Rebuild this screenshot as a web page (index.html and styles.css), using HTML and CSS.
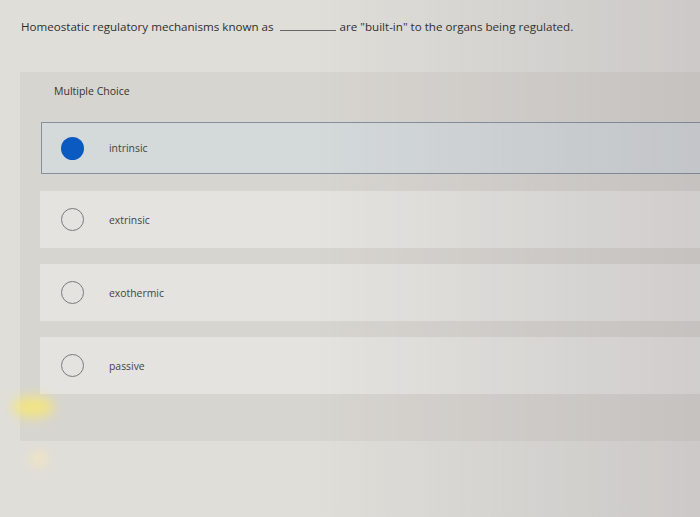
FILE: index.html
```html
<!DOCTYPE html>
<html lang="en">
<head>
    <meta charset="UTF-8">
    <meta name="viewport" content="width=device-width, initial-scale=1.0">
    <title>Multiple Choice</title>
    <link rel="stylesheet" href="styles.css">
</head>
<body>
    <p class="question">
        Homeostatic regulatory mechanisms known as <span class="blank"></span> are "built-in" to the organs being regulated.
    </p>

    <div class="panel">
        <div class="panel-title">Multiple Choice</div>

        <div class="choice selected">
            <span class="radio"></span>
            <span class="label">intrinsic</span>
        </div>
        <div class="choice">
            <span class="radio"></span>
            <span class="label">extrinsic</span>
        </div>
        <div class="choice">
            <span class="radio"></span>
            <span class="label">exothermic</span>
        </div>
        <div class="choice">
            <span class="radio"></span>
            <span class="label">passive</span>
        </div>
    </div>

    <span class="glare glare-big"></span>
    <span class="glare glare-small"></span>
</body>
</html>
```

FILE: styles.css
```css
body {
    margin: 0;
    height: 517px;
    overflow: hidden;
    font-family: "Open Sans", Lato, sans-serif;
    color: #3a3a3a;
    background: #dfded9;
}
/* screen tint: darker towards the right edge */
body::after {
    content: "";
    position: fixed;
    inset: 0;
    pointer-events: none;
    background: linear-gradient(to right, rgba(90, 80, 95, 0) 45%, rgba(90, 80, 95, 0.14) 100%);
}
.question {
    margin: 0;
    padding: 19px 21px 0;
    font-size: 11.6px;
    line-height: 15px;
    color: #2f2f2f;
}
.blank {
    display: inline-block;
    width: 56px;
    height: 9px;
    border-bottom: 1px solid #666;
    margin: 0 1px 0 3px;
}
.panel {
    margin: 38px 0 0 20px;
    padding-bottom: 47px;
    background: #d7d5d0;
}
.panel-title {
    height: 38px;
    line-height: 38px;
    padding-left: 34px;
    margin-bottom: 12px;
    font-size: 10.5px;
    color: #333;
}
.choice {
    display: flex;
    align-items: center;
    height: 57px;
    margin-left: 20px;
    margin-bottom: 16px;
    padding-left: 21px;
    background: #e4e3df;
    box-sizing: border-box;
}
.choice:last-child {
    margin-bottom: 0;
}
.choice.selected {
    height: 52px;
    margin-left: 21px;
    margin-bottom: 17px;
    padding-left: 19px;
    background: #d4d9da;
    border: 1px solid #868fa0;
    border-right: none;
}
.radio {
    width: 21px;
    height: 21px;
    border: 1.3px solid #7a7a7a;
    border-radius: 50%;
    flex-shrink: 0;
}
.selected .radio {
    width: 23px;
    height: 23px;
    border: none;
    background: #0b5ac2;
}
.label {
    margin-left: 25px;
    font-size: 10.4px;
    color: #444;
}
/* light reflections on the glass */
.glare {
    position: absolute;
    border-radius: 50%;
    pointer-events: none;
    filter: blur(6px);
}
.glare-big {
    left: 12px;
    top: 396px;
    width: 42px;
    height: 22px;
    background: rgba(250, 232, 110, 0.75);
}
.glare-small {
    left: 30px;
    top: 452px;
    width: 18px;
    height: 14px;
    background: rgba(255, 232, 180, 0.7);
}
```
